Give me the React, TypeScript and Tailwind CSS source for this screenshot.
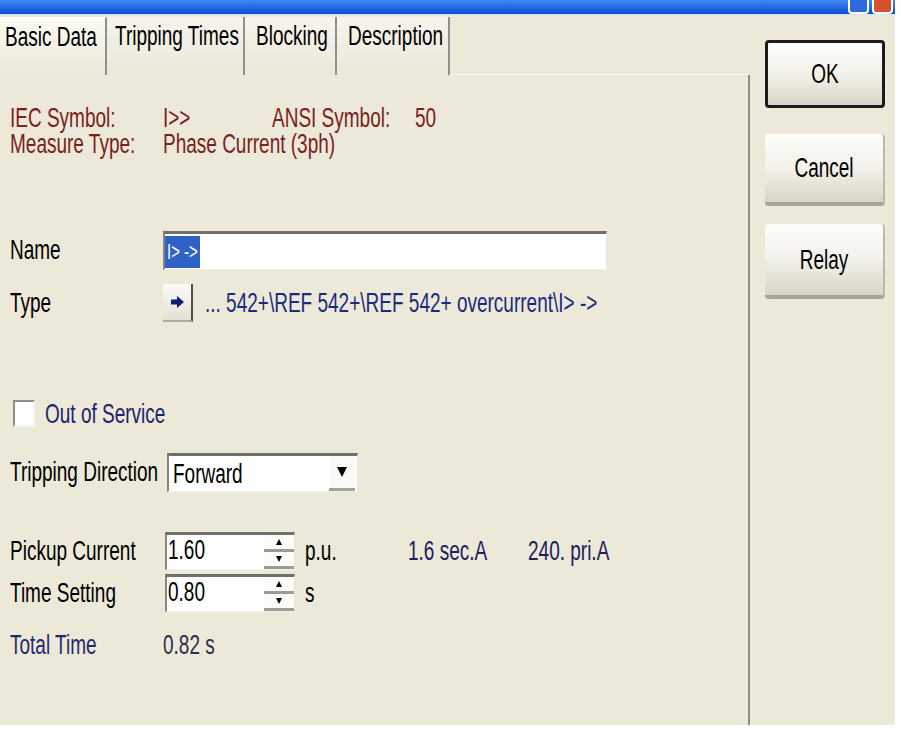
import type { ReactNode } from 'react';

// tall, narrow dialog text (the screenshot is stretched vertically)
function T({ children, className = '' }: { children: ReactNode; className?: string }) {
  return <span className={`inline-block origin-center scale-y-[1.45] leading-[0.9] whitespace-pre ${className}`}>{children}</span>;
}

function TitleBar() {
  return (
    <div className="h-[15px] flex justify-end items-end gap-[3px] pr-[2px] bg-linear-to-b from-[#3f88f3] to-[#0b4bd2] border-b border-b-[#d8e4f8]">
      <div className="w-[21px] h-[14px] rounded-b-[4px] border-2 border-t-0 border-white bg-[#2d69dc]" />
      <div className="w-[21px] h-[14px] rounded-b-[4px] border-2 border-t-0 border-white bg-[#d5522f]" />
    </div>
  );
}

const tabs = [
  { label: 'Basic Data', width: 'w-[107px] pl-[5px]', active: true },
  { label: 'Tripping Times', width: 'w-[138px] pl-[8px]', active: false },
  { label: 'Blocking', width: 'w-[92px] pl-[11px]', active: false },
  { label: 'Description', width: 'w-[113px] pl-[11px]', active: false },
];

function TabStrip() {
  return (
    <div className="h-[58px] flex">
      {tabs.map((tab) => (
        <div
          key={tab.label}
          className={`${tab.width} h-full flex items-center pb-[20px] border-r-2 border-r-[#8f9191] ${
            tab.active ? 'bg-linear-to-b from-[#fbfaf4] to-[#ece9d8] border-t border-t-white' : 'bg-linear-to-b from-[#f6f4ec] to-[#ebe8da]'
          }`}
        >
          <T>{tab.label}</T>
        </div>
      ))}
      <div className="flex-1 border-b border-b-[#fbfaf5]" />
    </div>
  );
}

function Sunken({ className = '', children }: { className?: string; children: ReactNode }) {
  return (
    <div
      className={`bg-white flex border-t-[3px] border-l-2 border-r border-b border-t-[#6f6f6c] border-l-[#85857f] border-r-[#e6e5de] border-b-[#f1f0ea] ${className}`}
    >
      {children}
    </div>
  );
}

function Spin({ value }: { value: string }) {
  return (
    <Sunken className="w-[130px] h-[38px]">
      <div className="flex-1 pl-[1px] pb-[4px] flex items-center">
        <T>{value}</T>
      </div>
      <div className="w-[30px] flex flex-col bg-[#fbfbf8]">
        <div className="flex-1 flex items-center justify-center border-b-[3px] border-b-[#9c9b92]">
          <div className="w-0 h-0 border-l-[3px] border-r-[3px] border-b-[6px] border-l-transparent border-r-transparent border-b-black" />
        </div>
        <div className="flex-1 flex items-center justify-center border-b-[3px] border-b-[#9c9b92]">
          <div className="w-0 h-0 border-l-[3px] border-r-[3px] border-t-[6px] border-l-transparent border-r-transparent border-t-black" />
        </div>
      </div>
    </Sunken>
  );
}

function Panel() {
  return (
    <div className="flex-1 flex flex-col pl-[10px] border-r-2 border-r-[#8e8d85]">
      <div className="mt-[30px] h-[26px] flex items-center text-[#7a1e1e]">
        <div className="w-[153px]"><T>IEC Symbol:</T></div>
        <div className="w-[109px]"><T>{'I>>'}</T></div>
        <div className="w-[143px]"><T>ANSI Symbol:</T></div>
        <T>50</T>
      </div>
      <div className="h-[26px] flex items-center text-[#7a1e1e]">
        <div className="w-[153px]"><T>Measure Type:</T></div>
        <T>Phase Current (3ph)</T>
      </div>

      <div className="mt-[74px] h-[39px] flex items-center">
        <div className="w-[153px]"><T>Name</T></div>
        <Sunken className="w-[444px] h-[39px] items-center">
          <div className="h-[32px] px-[2px] flex items-center bg-[#2f62c6] text-white text-[15px]">
            <T>{'I> ->'}</T>
          </div>
        </Sunken>
      </div>

      <div className="mt-[14px] h-[38px] flex items-center">
        <div className="w-[153px]"><T>Type</T></div>
        <div className="w-[30px] h-[38px] flex items-center justify-center bg-linear-to-b from-[#fbfaf6] to-[#e4e1d4] border-r-2 border-r-[#4f4f4a] border-b-2 border-b-[#b0ad9f]">
          <svg width="13" height="12" viewBox="0 0 13 12">
            <path d="M0 3.5h6V0l7 6-7 6V8.5H0z" fill="#141a6e" />
          </svg>
        </div>
        <T className="ml-[12px] text-[#1d2a7d]">{'... 542+\\REF 542+\\REF 542+ overcurrent\\I> ->'}</T>
      </div>

      <div className="mt-[78px] h-[27px] flex items-center">
        <div className="ml-[3px] w-[22px] h-[27px] bg-white border-2 border-t-[#8e8d86] border-l-[#8e8d86] border-r-[#f4f3ee] border-b-[#f4f3ee]" />
        <T className="ml-[10px] text-[#23226e]">Out of Service</T>
      </div>

      <div className="mt-[26px] h-[39px] flex items-center">
        <div className="w-[157px]"><T>Tripping Direction</T></div>
        <Sunken className="w-[191px] h-[39px]">
          <div className="flex-1 pl-[4px] flex items-center">
            <T>Forward</T>
          </div>
          <div className="w-[26px] mr-[2px] flex items-center justify-center bg-[#f9f9f6] border-b-[3px] border-b-[#a3a299]">
            <div className="w-0 h-0 border-l-[5px] border-r-[5px] border-t-[10px] border-l-transparent border-r-transparent border-t-black" />
          </div>
        </Sunken>
      </div>

      <div className="mt-[40px] h-[38px] flex items-center">
        <div className="w-[155px]"><T>Pickup Current</T></div>
        <Spin value="1.60" />
        <div className="ml-[10px] w-[103px]"><T>p.u.</T></div>
        <div className="w-[120px] text-[#20205c]"><T>1.6 sec.A</T></div>
        <T className="text-[#20205c]">240. pri.A</T>
      </div>

      <div className="mt-[4px] h-[38px] flex items-center">
        <div className="w-[155px]"><T>Time Setting</T></div>
        <Spin value="0.80" />
        <T className="ml-[10px]">s</T>
      </div>

      <div className="mt-[20px] h-[26px] flex items-center">
        <div className="w-[153px] text-[#27276f]"><T>Total Time</T></div>
        <T className="text-[#2e2e4e]">0.82 s</T>
      </div>
    </div>
  );
}

function DialogButton({ label, height, primary = false, className = '' }: { label: string; height: string; primary?: boolean; className?: string }) {
  return (
    <div
      className={`${height} ${className} w-[120px] rounded-[4px] flex items-center justify-center bg-linear-to-b from-[#fdfdfa] via-[#f2f1ea] to-[#d8d5c7] ${
        primary ? 'border-[3px] border-[#1b1b1b]' : 'border-r-2 border-b-[4px] border-r-[#bcb8aa] border-b-[#a8a497]'
      }`}
    >
      <T>{label}</T>
    </div>
  );
}

function Buttons() {
  return (
    <div className="ml-[15px] pt-[25px] flex flex-col">
      <DialogButton label="OK" height="h-[68px]" primary />
      <DialogButton label="Cancel" height="h-[72px]" className="mt-[26px]" />
      <DialogButton label="Relay" height="h-[75px]" className="mt-[18px]" />
    </div>
  );
}

export default function App() {
  return (
    <div className="w-[901px] h-[729px] bg-white overflow-hidden">
      <div className="w-[895px] h-[725px] bg-[#ece9d8] flex flex-col text-[19px] text-black font-['Liberation_Sans',Arial,sans-serif]">
        <TitleBar />
        <div className="flex flex-1 min-h-0">
          <div className="w-[750px] flex flex-col pt-[2px]">
            <TabStrip />
            <Panel />
          </div>
          <Buttons />
        </div>
      </div>
    </div>
  );
}
